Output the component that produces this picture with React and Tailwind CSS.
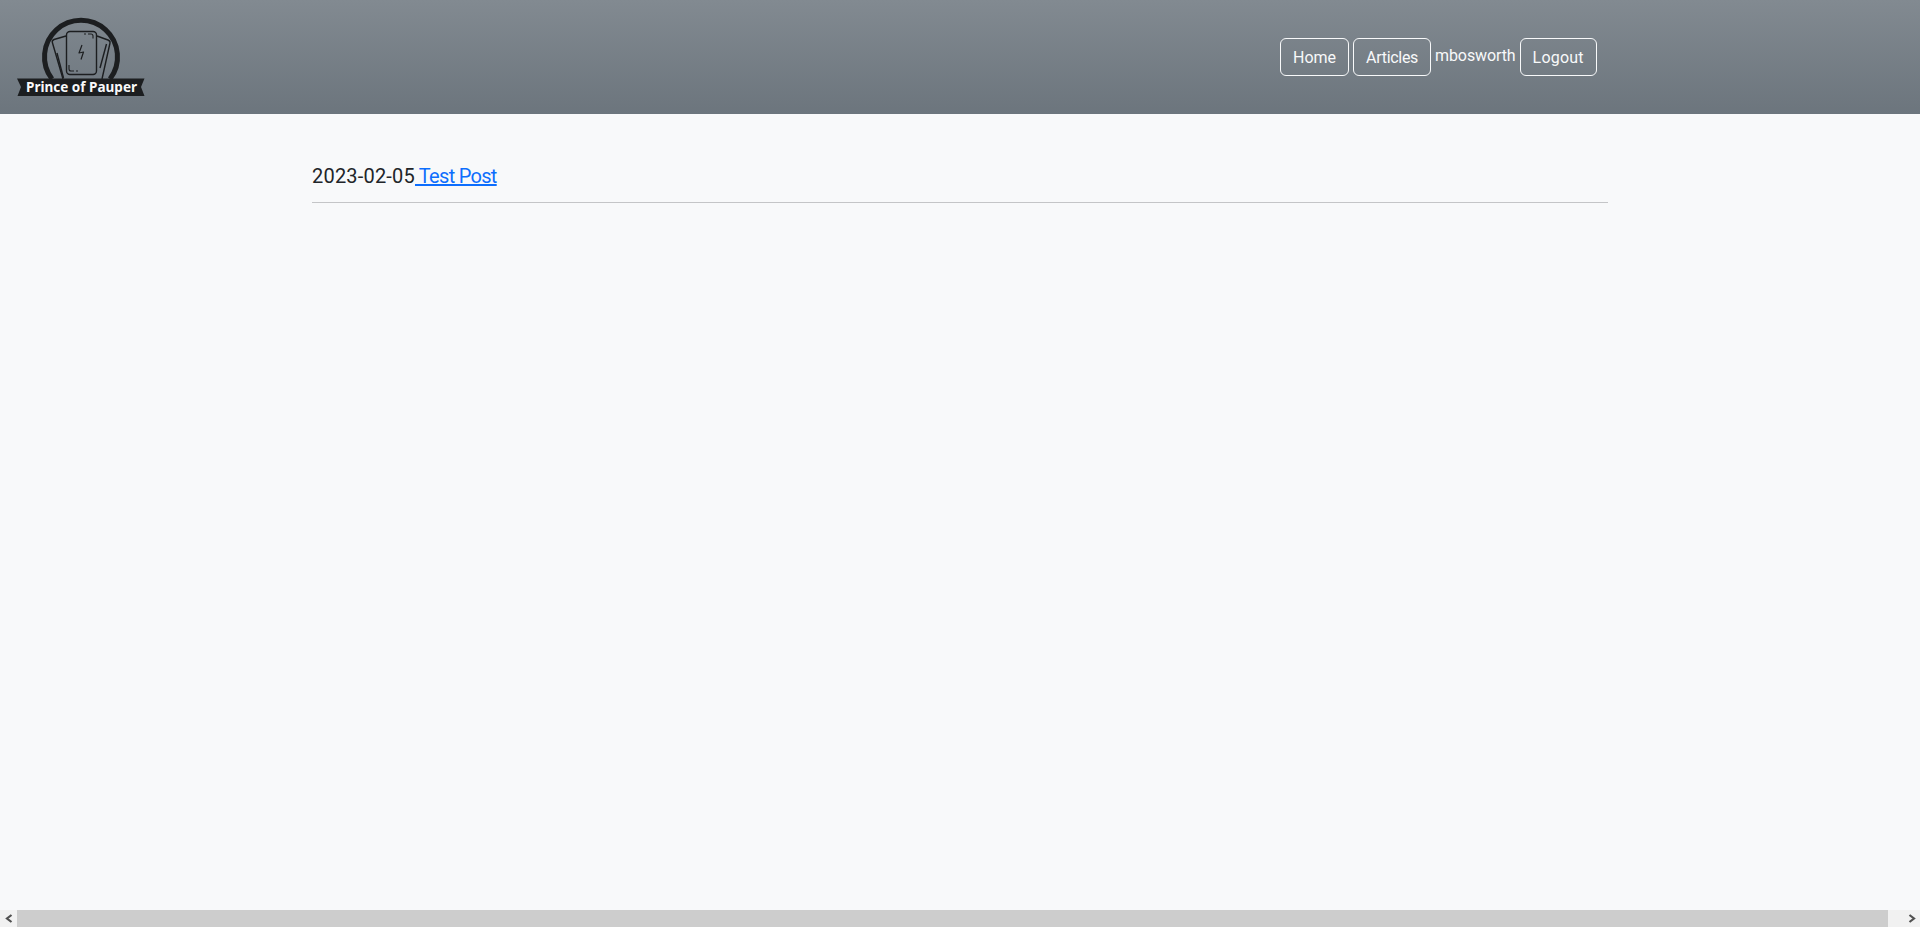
const INK = '#1c1e20'

// drawn in page coordinates so the numbers read straight off the screenshot
function Logo() {
  return (
    <svg width="128" height="80" viewBox="17 17 128 80" fill="none">
      <path d="M52 79 A 36.5 36.5 0 1 1 110 79" stroke={INK} strokeWidth="5" />
      {/* back cards */}
      <g stroke={INK} strokeWidth="1.4" strokeLinejoin="round">
        <path d="M66 36 L54 39.5 Q51.5 40.5 52.5 43 L63 79" />
        <path d="M57 53 L63.5 78" />
        <path d="M97 36 L108 40 Q110.5 41 110 43 L102 79" />
        <path d="M106.5 44 L100 68" />
      </g>
      {/* front card */}
      <rect x="66.5" y="31.5" width="30" height="43" rx="3.5" stroke={INK} strokeWidth="1.4" />
      <path d="M84 34 H86 M88 34 H91 Q93 34 93 36 V38.5" stroke={INK} strokeWidth="1.1" />
      <path d="M69 65 V69 Q69 71 71 71 H74 M76 71 H78" stroke={INK} strokeWidth="1.1" />
      <path d="M82 45 L79 53 L83.5 52 L81 59.5" stroke={INK} strokeWidth="1.2" strokeLinejoin="round" />
      {/* ribbon */}
      <polygon points="17,78.5 144.5,78.5 141,87 144.5,96 17.5,96 21,87" fill={INK} />
      <text
        x="81.5"
        y="92"
        textAnchor="middle"
        fill="#f8f9fa"
        fontFamily='"Noto Sans", sans-serif'
        fontWeight="700"
        fontSize="14.5"
        textLength="111"
        lengthAdjust="spacingAndGlyphs"
      >
        Prince of Pauper
      </text>
    </svg>
  )
}

function NavButton({ children, className = '' }) {
  return (
    <a
      href="#"
      className={`block h-[38px] px-[12px] leading-[38px] text-[16px] text-[#f8f9fa] border border-[#f8f9fa] rounded-[6px] ${className}`}
    >
      {children}
    </a>
  )
}

export default function App() {
  return (
    <div className="h-screen flex flex-col overflow-hidden bg-[#f8f9fa] font-['Roboto','Noto_Sans',sans-serif] text-[#212529]">
      <header className="h-[114px] shrink-0 flex items-start bg-gradient-to-b from-[#828a91] to-[#6c757d]">
        <div className="ml-[17px] mt-[17px]">
          <Logo />
        </div>
        <nav className="ml-[1135px] mt-[38px] flex items-start gap-[4px]">
          <NavButton>Home</NavButton>
          <NavButton className="tracking-[-0.3px]">Articles</NavButton>
          <span className="text-[16px] leading-[24px] mt-[6px] text-[#f8f9fa] tracking-[-0.1px]">mbosworth</span>
          <NavButton className="tracking-[0.2px]">Logout</NavButton>
        </nav>
      </header>

      <main className="flex-1 pl-[312px] pt-[47px]">
        <div className="w-[1296px] pb-[11px] border-b border-[#c4c5c7] text-[20px] leading-[30px]">
          <span className="tracking-[0.2px]">2023-02-05</span>
          <a href="#" className="text-[#0d6efd] underline tracking-[-0.7px]"> Test Post</a>
        </div>
      </main>

      <div className="h-[17px] shrink-0 flex bg-[#f1f1f1]">
        <div className="w-[17px] flex items-center justify-center">
          <svg width="8" height="9" viewBox="0 0 8 9" fill="none">
            <path d="M6.5 1 L2 4.5 L6.5 8" stroke="#505050" strokeWidth="2.2" />
          </svg>
        </div>
        <div className="w-[1871px] bg-[#cdcdcd]" />
        <div className="flex-1" />
        <div className="w-[17px] flex items-center justify-center">
          <svg width="8" height="9" viewBox="0 0 8 9" fill="none">
            <path d="M1.5 1 L6 4.5 L1.5 8" stroke="#505050" strokeWidth="2.2" />
          </svg>
        </div>
      </div>
    </div>
  )
}
